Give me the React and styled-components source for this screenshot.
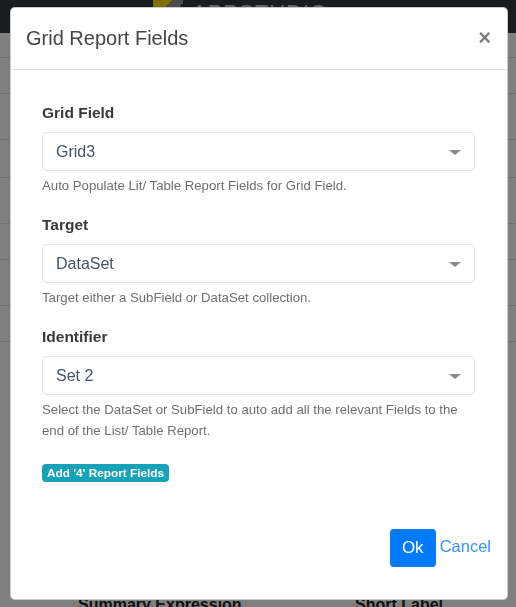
import React from 'react';
import styled, { createGlobalStyle } from 'styled-components';

const GlobalStyle = createGlobalStyle`
  html, body {
    margin: 0;
    padding: 0;
    background: #fff;
    font-family: "Liberation Sans", Arial, sans-serif;
    overflow: hidden;
  }
  * { box-sizing: border-box; }
`;

/* page behind the dialog */

const Page = styled.div`
  width: 516px;
  height: 607px;
  overflow: hidden;
`;

const Navbar = styled.div`
  height: 33px;
  background: #343a40;
  display: flex;
  align-items: flex-end;
  padding-left: 153px;
  overflow: hidden;
`;

const LogoMark = styled.div`
  width: 30px;
  height: 40px;
  margin-bottom: 2px;
  background: linear-gradient(135deg, #ffe100 0 40%, #9a9a9a 40% 60%, transparent 60%);
`;

const LogoText = styled.div`
  margin-left: 9px;
  margin-bottom: 9px;
  font-size: 22px;
  letter-spacing: 1px;
  color: #d0d0d0;
  line-height: 1;
`;

const TableRow = styled.div`
  height: ${(p) => p.$h}px;
  border-bottom: 1px solid #dedede;
`;

const SectionHead = styled.div`
  display: grid;
  grid-template-columns: 277px 1fr;
  padding: 254px 0 0 78px;
  font-size: 16px;
  font-weight: 700;
  color: #222;
`;

/* dialog */

const Backdrop = styled.div`
  position: fixed;
  inset: 0;
  background: rgba(0, 0, 0, 0.5);
  padding: 7px 8px 0 10px;
`;

const Dialog = styled.div`
  width: 498px;
  background: #fff;
  border: 1px solid rgba(0, 0, 0, 0.2);
  border-radius: 5px;
  display: flex;
  flex-direction: column;
`;

const Header = styled.div`
  display: flex;
  align-items: center;
  justify-content: space-between;
  padding: 15px 16px 16px 15px;
  border-bottom: 1px solid #dee2e6;
  height: 62px;
`;

const Title = styled.h5`
  margin: 0;
  font-size: 20px;
  font-weight: 400;
  color: #444;
  line-height: 30px;
`;

const Close = styled.button`
  border: none;
  background: none;
  padding: 0;
  font-size: 22px;
  font-weight: 700;
  line-height: 1;
  color: #000;
  opacity: 0.5;
  margin-top: -1px;
  font-family: "Liberation Sans", Arial, sans-serif;
  cursor: pointer;
`;

const Body = styled.div`
  padding: 31px 32px 35px 31px;
`;

const Group = styled.div`
  margin-bottom: 17px;
  &:last-of-type {
    margin-bottom: 0;
  }
`;

const Label = styled.label`
  display: block;
  font-size: 15.5px;
  font-weight: 700;
  color: #3a3a3a;
  line-height: 24px;
  margin-bottom: 7px;
`;

const SelectBox = styled.div`
  height: 39px;
  border: 1px solid #e3e5e8;
  border-radius: 5px;
  display: flex;
  align-items: center;
  justify-content: space-between;
  padding: 0 13px 0 13px;
  font-size: 16px;
  color: #46546a;
`;

const Caret = styled.span`
  width: 0;
  height: 0;
  border-left: 6px solid transparent;
  border-right: 6px solid transparent;
  border-top: 5px solid #8a8a8a;
  margin-top: 2px;
`;

const Help = styled.div`
  margin-top: 4px;
  font-size: 13.2px;
  line-height: 21px;
  color: #6f6f6f;
`;

const Badge = styled.span`
  display: inline-block;
  margin-top: 23px;
  background: #17a2b8;
  color: #fff;
  font-size: 11.8px;
  font-weight: 700;
  line-height: 18px;
  padding: 0 5px;
  border-radius: 4px;
`;

const Footer = styled.div`
  display: flex;
  justify-content: flex-end;
  align-items: center;
  gap: 4px;
  padding: 12px 16px 32px 12px;
`;

const OkButton = styled.button`
  height: 38px;
  padding: 0 12px;
  border: none;
  border-radius: 4px;
  background: #007bff;
  color: #fff;
  font-size: 17px;
  font-family: "Liberation Sans", Arial, sans-serif;
  cursor: pointer;
`;

const CancelLink = styled.a`
  color: #3392ff;
  font-size: 16.5px;
  margin-top: -3px;
  cursor: pointer;
`;

const fields = [
  { label: 'Grid Field', value: 'Grid3', help: 'Auto Populate Lit/ Table Report Fields for Grid Field.' },
  { label: 'Target', value: 'DataSet', help: 'Target either a SubField or DataSet collection.' },
  {
    label: 'Identifier',
    value: 'Set 2',
    help: 'Select the DataSet or SubField to auto add all the relevant Fields to the end of the List/ Table Report.',
  },
];

const rows = [25, 36, 46, 38, 46, 36, 46, 36];

const App = () => (
  <>
    <GlobalStyle />
    <Page>
      <Navbar>
        <LogoMark />
        <LogoText>APPSTUDIO</LogoText>
      </Navbar>
      {rows.map((h, i) => (
        <TableRow key={i} $h={h} />
      ))}
      <SectionHead>
        <span>Summary Expression</span>
        <span>Short Label</span>
      </SectionHead>
    </Page>
    <Backdrop>
      <Dialog>
        <Header>
          <Title>Grid Report Fields</Title>
          <Close aria-label="Close">×</Close>
        </Header>
        <Body>
          {fields.map((f) => (
            <Group key={f.label}>
              <Label>{f.label}</Label>
              <SelectBox>
                <span>{f.value}</span>
                <Caret />
              </SelectBox>
              <Help>{f.help}</Help>
            </Group>
          ))}
          <Badge>Add '4' Report Fields</Badge>
        </Body>
        <Footer>
          <OkButton>Ok</OkButton>
          <CancelLink>Cancel</CancelLink>
        </Footer>
      </Dialog>
    </Backdrop>
  </>
);

export default App;
